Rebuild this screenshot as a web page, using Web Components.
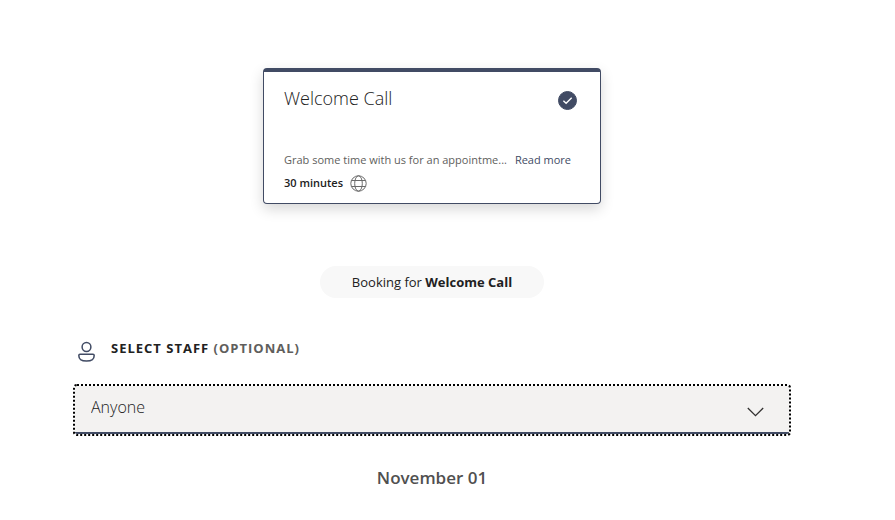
<!DOCTYPE html>
<html lang="en">
<head>
<meta charset="utf-8">
<meta name="viewport" content="width=device-width, initial-scale=1">
<title>Book a call</title>
<style>
body {
  margin: 0;
  background: #fff;
  color: #212121;
  font-family: "Open Sans", "Noto Sans", sans-serif;
  --accent: #414b64;
  --muted: #605e5c;
}
</style>
</head>
<body>
<booking-page>
  <service-card slot="service" duration="30 minutes">
    Welcome Call
    <span slot="description">Grab some time with us for an appointme...</span>
  </service-card>
  <booking-summary slot="summary">Welcome Call</booking-summary>
  <staff-picker slot="staff"></staff-picker>
  <booking-date slot="date">November 01</booking-date>
</booking-page>

<script>
'use strict';

const bookingPageTemplate = document.createElement('template');
bookingPageTemplate.innerHTML = `
<style>
:host {
  display: block;
  padding: 68px 104px 24px 73px;
}

main {
  display: flex;
  flex-direction: column;
  align-items: center;
  max-width: 960px;
  margin: 0 auto;
}

.summary {
  margin-top: 62px;
}

.staff {
  align-self: stretch;
  margin-top: 38px;
}

.date {
  margin-top: 30px;
}
</style>
<main>
  <slot name="service"></slot>
  <div class="summary"><slot name="summary"></slot></div>
  <div class="staff"><slot name="staff"></slot></div>
  <div class="date"><slot name="date"></slot></div>
</main>
`;

class BookingPage extends HTMLElement {
	constructor() {
		super();
		const shadow = this.attachShadow({mode: 'open'});
		shadow.appendChild(bookingPageTemplate.content.cloneNode(true));
	}
}

customElements.define('booking-page', BookingPage);

const serviceCardTemplate = document.createElement('template');
serviceCardTemplate.innerHTML = `
<style>
:host {
  display: block;
  box-sizing: border-box;
  width: 100%;
  max-width: 338px;
  padding: 14px 23px 10px 20px;
  border: 1px solid var(--accent);
  border-top-width: 4px;
  border-radius: 4px;
  box-shadow: 0 5px 14px rgba(0, 0, 0, 0.16);
  font-size: 11px;
  line-height: 20px;
}

header {
  display: flex;
  justify-content: space-between;
  align-items: flex-end;
}

label {
  font-size: 18px;
  font-weight: 300;
  line-height: 24px;
}

.check {
  display: grid;
  width: 19px;
  height: 19px;
}

.check > * {
  grid-area: 1 / 1;
  width: 19px;
  height: 19px;
  margin: 0;
}

input {
  appearance: none;
  border: 1px solid var(--accent);
  border-radius: 50%;
}

input:checked {
  background: var(--accent);
}

.check svg {
  pointer-events: none;
}

.description {
  display: flex;
  gap: 8px;
  margin-top: 40px;
  color: var(--muted);
}

a {
  color: var(--accent);
  text-decoration: none;
}

footer {
  display: flex;
  align-items: center;
  gap: 7px;
  margin-top: 3px;
  font-weight: 600;
}
</style>
<header>
  <label for="service"><slot></slot></label>
  <span class="check">
    <input type="radio" id="service" name="service" checked>
    <svg viewBox="0 0 19 19" fill="none" stroke="#fff" stroke-width="1.4" aria-hidden="true">
      <path d="M5.4 9.7 8.1 12.2 13.7 6.8"/>
    </svg>
  </span>
</header>
<div class="description">
  <slot name="description"></slot>
  <a href="#details">Read more</a>
</div>
<footer>
  <span class="duration"></span>
  <svg width="17" height="17" viewBox="0 0 17 17" fill="none" stroke="#6b6b6b" aria-hidden="true">
    <circle cx="8.5" cy="8.5" r="7.7"/>
    <ellipse cx="8.5" cy="8.5" rx="3.8" ry="7.7"/>
    <path d="M1.3 5.5h14.4M1.3 11.5h14.4"/>
  </svg>
</footer>
`;

class ServiceCard extends HTMLElement {
	static get observedAttributes() {
		return ['duration'];
	}

	constructor() {
		super();
		const shadow = this.attachShadow({mode: 'open'});
		shadow.appendChild(serviceCardTemplate.content.cloneNode(true));
	}

	attributeChangedCallback(name, oldValue, newValue) {
		this.shadowRoot.querySelector('.duration').textContent = newValue;
	}
}

customElements.define('service-card', ServiceCard);

const bookingSummaryTemplate = document.createElement('template');
bookingSummaryTemplate.innerHTML = `
<style>
:host {
  display: block;
  padding: 6px 32px;
  border-radius: 16px;
  background: #f8f8f8;
  font-size: 13px;
  line-height: 20px;
}

strong {
  font-weight: 700;
}
</style>
Booking for <strong><slot></slot></strong>
`;

class BookingSummary extends HTMLElement {
	constructor() {
		super();
		const shadow = this.attachShadow({mode: 'open'});
		shadow.appendChild(bookingSummaryTemplate.content.cloneNode(true));
	}
}

customElements.define('booking-summary', BookingSummary);

const staffPickerTemplate = document.createElement('template');
staffPickerTemplate.innerHTML = `
<style>
:host {
  display: block;
}

.heading {
  display: flex;
  align-items: flex-start;
  gap: 16px;
  padding-left: 5px;
}

.heading svg {
  margin-top: 5px;
}

label {
  font-size: 13px;
  font-weight: 700;
  letter-spacing: 1px;
  line-height: 24px;
}

.optional {
  color: var(--muted);
}

.field {
  display: grid;
  align-items: center;
  margin: 24px 2px 2px;
}

.field > * {
  grid-area: 1 / 1;
}

select {
  appearance: none;
  width: 100%;
  height: 48px;
  padding: 0 48px 4px 16px;
  border: 0;
  border-bottom: 2px solid var(--accent);
  border-radius: 2px;
  outline: 2px dotted #000;
  background: #f3f2f1;
  color: #212121;
  font: 300 16px/24px "Open Sans", "Noto Sans", sans-serif;
}

.chevron {
  justify-self: end;
  margin: 4px 25px 0 0;
  pointer-events: none;
}
</style>
<div class="heading">
  <svg width="17" height="21" viewBox="0 0 17 21" fill="none" stroke="#414b64" stroke-width="1.5" aria-hidden="true">
    <circle cx="8.5" cy="6" r="4.4"/>
    <path d="M2 13.2h13a1.2 1.2 0 0 1 1.2 1.2c0 3.6-3.2 5.6-7.7 5.6s-7.7-2-7.7-5.6a1.2 1.2 0 0 1 1.2-1.2z"/>
  </svg>
  <label for="staff">SELECT STAFF <span class="optional">(OPTIONAL)</span></label>
</div>
<div class="field">
  <select id="staff">
    <option>Anyone</option>
  </select>
  <svg class="chevron" width="17" height="10" viewBox="0 0 17 10" fill="none" stroke="#323130" stroke-width="1.3" aria-hidden="true">
    <path d="M.8 1 8.5 8.7 16.2 1"/>
  </svg>
</div>
`;

class StaffPicker extends HTMLElement {
	constructor() {
		super();
		const shadow = this.attachShadow({mode: 'open'});
		shadow.appendChild(staffPickerTemplate.content.cloneNode(true));
	}
}

customElements.define('staff-picker', StaffPicker);

const bookingDateTemplate = document.createElement('template');
bookingDateTemplate.innerHTML = `
<style>
:host {
  display: block;
}

h2 {
  margin: 0;
  color: #505050;
  font-size: 17px;
  font-weight: 600;
  line-height: 24px;
}
</style>
<h2><slot></slot></h2>
`;

class BookingDate extends HTMLElement {
	constructor() {
		super();
		const shadow = this.attachShadow({mode: 'open'});
		shadow.appendChild(bookingDateTemplate.content.cloneNode(true));
	}
}

customElements.define('booking-date', BookingDate);
</script>
</body>
</html>
